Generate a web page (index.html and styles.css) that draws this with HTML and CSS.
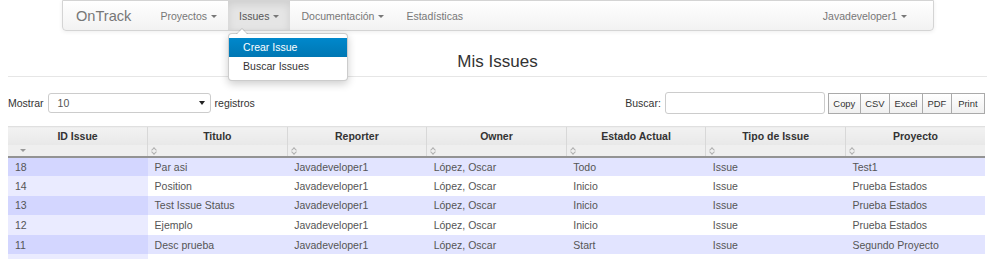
FILE: index.html
```html
<!DOCTYPE html>
<html lang="es">
<head>
<meta charset="utf-8">
<title>OnTrack - Mis Issues</title>
<link rel="stylesheet" href="styles.css">
</head>
<body>
<nav class="navbar">
  <div class="brand">OnTrack</div>
  <ul class="nav">
    <li class="nav-item">Proyectos <span class="caret"></span></li>
    <li class="nav-item active">Issues <span class="caret"></span>
      <ul class="dropdown">
        <li class="dd-item selected">Crear Issue</li>
        <li class="dd-item">Buscar Issues</li>
      </ul>
    </li>
    <li class="nav-item">Documentación <span class="caret"></span></li>
    <li class="nav-item">Estadísticas</li>
  </ul>
  <ul class="nav nav-right">
    <li class="nav-item">Javadeveloper1 <span class="caret"></span></li>
  </ul>
</nav>

<main class="content">
  <div class="page-header"><h1 class="title">Mis Issues</h1></div>

  <div class="toolbar">
    <div class="length">
      <span>Mostrar</span>
      <span class="select"><span>10</span><span class="sel-arrow"></span></span>
      <span>registros</span>
    </div>
    <div class="filter">
      <span>Buscar:</span>
      <span class="search"></span>
      <div class="btn-group">
        <span class="btn">Copy</span><span class="btn">CSV</span><span class="btn">Excel</span><span class="btn">PDF</span><span class="btn">Print</span>
      </div>
    </div>
  </div>

  <table class="grid">
    <thead>
      <tr class="head-titles">
        <th>ID Issue</th><th>Titulo</th><th>Reporter</th><th>Owner</th><th>Estado Actual</th><th>Tipo de Issue</th><th>Proyecto</th>
      </tr>
      <tr class="head-sort">
        <th><span class="sort-desc"></span></th>
        <th><span class="sort-both"></span></th>
        <th><span class="sort-both"></span></th>
        <th><span class="sort-both"></span></th>
        <th><span class="sort-both"></span></th>
        <th><span class="sort-both"></span></th>
        <th><span class="sort-both"></span></th>
      </tr>
    </thead>
    <tbody>
      <tr class="odd"><td>18</td><td>Par asi</td><td>Javadeveloper1</td><td>López, Oscar</td><td>Todo</td><td>Issue</td><td>Test1</td></tr>
      <tr class="even"><td>14</td><td>Position</td><td>Javadeveloper1</td><td>López, Oscar</td><td>Inicio</td><td>Issue</td><td>Prueba Estados</td></tr>
      <tr class="odd"><td>13</td><td>Test Issue Status</td><td>Javadeveloper1</td><td>López, Oscar</td><td>Inicio</td><td>Issue</td><td>Prueba Estados</td></tr>
      <tr class="even"><td>12</td><td>Ejemplo</td><td>Javadeveloper1</td><td>López, Oscar</td><td>Inicio</td><td>Issue</td><td>Prueba Estados</td></tr>
      <tr class="odd"><td>11</td><td>Desc prueba</td><td>Javadeveloper1</td><td>López, Oscar</td><td>Start</td><td>Issue</td><td>Segundo Proyecto</td></tr>
      <tr class="even filler"><td></td><td></td><td></td><td></td><td></td><td></td><td></td></tr>
    </tbody>
  </table>
</main>
</body>
</html>
```

FILE: styles.css
```css
* { box-sizing: border-box; }

html, body {
  margin: 0;
  padding: 0;
  background: #fff;
  font-family: "Liberation Sans", Arial, sans-serif;
  font-size: 10.5px;
  color: #333;
  overflow: hidden;
}

/* ---------- navbar ---------- */
.navbar {
  display: flex;
  align-items: stretch;
  margin-left: 62px;
  width: 872px;
  height: 31px;
  background: linear-gradient(#ffffff, #f2f2f2);
  border: 1px solid #d4d4d4;
  border-radius: 0 0 4px 4px;
  box-shadow: 0 1px 4px rgba(0, 0, 0, 0.07);
  position: relative;
  z-index: 10;
}

.brand {
  display: flex;
  align-items: center;
  padding: 0 18px 0 13px;
  font-size: 14.6px;
  color: #777;
}

.nav {
  display: flex;
  margin: 0;
  padding: 0;
  list-style: none;
}

.nav-right { margin-left: auto; margin-right: 15px; }

.nav-item {
  position: relative;
  display: flex;
  align-items: center;
  gap: 4px;
  padding: 0 11px;
  color: #777;
  white-space: nowrap;
}

.nav-item.active {
  background: #e5e5e5;
  box-shadow: inset 0 3px 8px rgba(0, 0, 0, 0.1);
  color: #555;
}

.caret {
  display: inline-block;
  width: 0;
  height: 0;
  margin-top: 1px;
  border-top: 3px solid #777;
  border-left: 3px solid transparent;
  border-right: 3px solid transparent;
}

/* ---------- dropdown ---------- */
.dropdown {
  position: absolute;
  left: 0;
  top: 32px;
  width: 120px;
  margin: 0;
  padding: 4px 0;
  list-style: none;
  background: #fff;
  border: 1px solid rgba(0, 0, 0, 0.2);
  border-radius: 4px;
  box-shadow: 0 3px 8px rgba(0, 0, 0, 0.2);
}

.dropdown::before {
  content: "";
  position: absolute;
  left: 7px;
  top: -6px;
  border-left: 6px solid transparent;
  border-right: 6px solid transparent;
  border-bottom: 6px solid rgba(0, 0, 0, 0.15);
}

.dropdown::after {
  content: "";
  position: absolute;
  left: 8px;
  top: -5px;
  border-left: 5px solid transparent;
  border-right: 5px solid transparent;
  border-bottom: 5px solid #fff;
}

.dd-item {
  display: block;
  height: 19px;
  line-height: 19px;
  padding: 0 14px;
  color: #333;
  white-space: nowrap;
}

.dd-item.selected {
  color: #fff;
  background: linear-gradient(#0088cc, #0077b3);
}

/* ---------- content ---------- */
.content {
  padding: 0 15px 0 8px;
}

.page-header {
  margin: 21px -2px 0 0;
  padding-bottom: 4px;
  border-bottom: 1px solid #e6e6e6;
}

.title {
  margin: 0;
  height: 20px;
  line-height: 20px;
  text-align: center;
  font-size: 17px;
  font-weight: normal;
  color: #333;
}

.toolbar {
  display: flex;
  justify-content: space-between;
  align-items: center;
  margin-top: 15px;
  height: 22px;
}

.length, .filter {
  display: flex;
  align-items: center;
  gap: 4px;
}

.select {
  display: flex;
  justify-content: space-between;
  align-items: center;
  width: 163px;
  height: 20px;
  padding: 0 5px 0 9px;
  border: 1px solid #ccc;
  border-radius: 3px;
  color: #555;
}

.sel-arrow {
  width: 0;
  height: 0;
  border-top: 4px solid #222;
  border-left: 3px solid transparent;
  border-right: 3px solid transparent;
}

.search {
  display: block;
  width: 160px;
  height: 22px;
  border: 1px solid #ccc;
  border-radius: 3px;
  background: #fff;
}

.btn-group {
  display: flex;
  margin-left: -1px;
}

.btn {
  display: block;
  height: 21px;
  line-height: 19px;
  padding: 0 4.5px;
  font-size: 9.4px;
  color: #333;
  background: linear-gradient(#ffffff, #f0f0f0);
  border: 1px solid #aaa;
  margin-left: -1px;
}

.btn:first-child { margin-left: 0; }
.btn:last-child { padding: 0 6.5px; }

/* ---------- table ---------- */
.grid {
  width: 977px;
  margin-top: 12px;
  border-collapse: collapse;
  table-layout: fixed;
}

.grid th {
  font-weight: bold;
  color: #333;
  background: #ebebeb;
  border-left: 1px solid #d8d8d8;
  padding: 0;
}

.grid th:first-child { border-left: none; }

.head-titles th {
  height: 18px;
  text-align: center;
  background: linear-gradient(#f2f2f2, #e8e8e8);
  border-top: 1px solid #e0e0e0;
}

.head-sort th {
  height: 12px;
  text-align: left;
  padding-left: 3px;
  background: #efefef;
  border-bottom: 2px solid #939393;
}

.head-sort th:first-child { padding-left: 12px; }

.sort-both {
  display: block;
  width: 5px;
  height: 7px;
  position: relative;
}

.sort-both::before,
.sort-both::after {
  content: "";
  position: absolute;
  left: 1px;
  width: 3px;
  height: 3px;
  border-left: 1px solid #b0b0b0;
  border-top: 1px solid #b0b0b0;
}

.sort-both::before { top: 1px; transform: rotate(45deg); }
.sort-both::after { top: 3px; transform: rotate(225deg); }

.sort-desc {
  display: block;
  width: 0;
  height: 0;
  margin-top: 1px;
  border-top: 3px solid #999;
  border-left: 3px solid transparent;
  border-right: 3px solid transparent;
}

.grid td {
  height: 19.6px;
  padding: 0 7px;
  color: #555;
  white-space: nowrap;
  overflow: hidden;
}

.grid .filler td { height: 5px; }

.odd td { background: #e2e4ff; }
.odd td:first-child { background: #d3d6ff; }
.even td { background: #fff; }
.even td:first-child { background: #eaebff; }
```
